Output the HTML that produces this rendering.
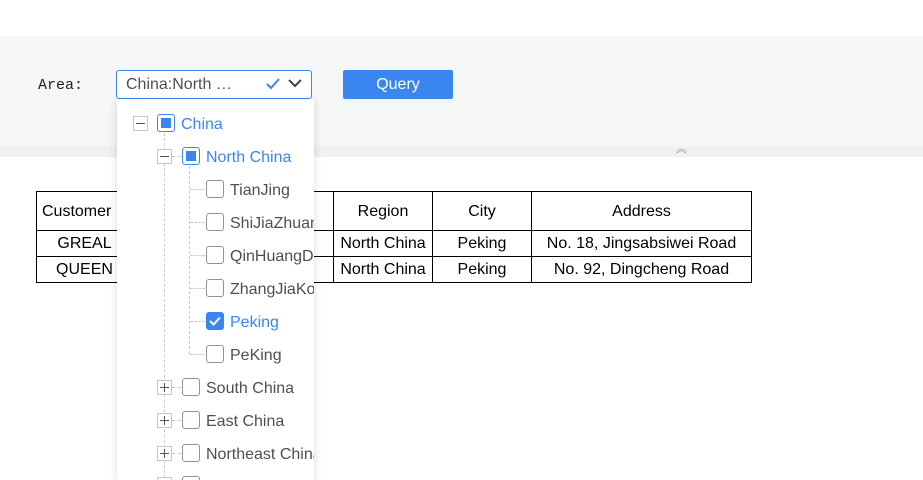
<!DOCTYPE html>
<html><head><style>
html,body{margin:0;width:923px;height:480px;overflow:hidden}
body{background:#fff;font-family:"Liberation Sans",sans-serif;position:relative}
.a{position:absolute}
.band{left:0;top:36px;width:923px;height:110px;background:#f5f6f7}
.band2{left:0;top:146px;width:923px;height:11px;background:#eef0f2}
table{position:absolute;left:36px;top:191px;border-collapse:collapse;font-size:16px;color:#000}
td{border:1px solid #000;text-align:center;padding:0;white-space:nowrap;overflow:hidden}
.dd{left:117px;top:99px;width:197px;height:381px;background:#fff;box-shadow:0 2px 8px rgba(0,0,0,.15)}
.cb{position:absolute;width:16px;height:16px;border:1px solid #8c94a3;border-radius:3px;background:#fff}
.cb.half{border-color:#3a86f0}
.cb.half:after{content:"";position:absolute;left:3px;top:3px;width:10px;height:10px;background:#3a86f0}
.cb.on{background:#3a86f0;border-color:#3a86f0}
.t{position:absolute;font-size:16px;color:#4a4f5a;white-space:nowrap}
.bl{color:#3a86f0}
.ex{position:absolute;width:13px;height:13px;border:1px solid #c4c8ce;background:#fff}
.ex:before{content:"";position:absolute;left:2px;top:5.5px;width:9px;height:1.5px;background:#555}
.ex.p:after{content:"";position:absolute;left:5.8px;top:2px;width:1.5px;height:9px;background:#555}
.vl{position:absolute;border-left:1px dashed #c8ccd2;width:0}
.hl{position:absolute;border-top:1px dashed #c8ccd2;height:0}
</style></head><body>
<div class="a band"></div><div class="a band2"></div>
<div class="a" style="left:676px;top:144px;color:#8a9099;font-size:11px;line-height:10px">︽</div>
<div class="a" style="left:38px;top:77px;font-family:'Liberation Mono',monospace;font-size:15px;color:#222">Area:</div>
<div class="a" style="left:116px;top:70px;width:194px;height:27px;border:1px solid #3a86f0;border-radius:3px;background:#fff"></div>
<div class="a" style="left:126px;top:76px;font-size:16px;color:#4a4f5a">China:North …</div>
<svg class="a" style="left:264px;top:76px" width="48" height="16"><path d="M3 8l4 4 8-9" stroke="#3a86f0" stroke-width="2" fill="none"/><path d="M25 4l6 6 6-6" stroke="#444" stroke-width="2" fill="none"/></svg>
<div class="a" style="left:343px;top:70px;width:110px;height:29px;background:#3a86f0;border-radius:2px;color:#fff;font-size:16px;text-align:center;line-height:30px">Query</div>
<table>
<tr style="height:39px"><td style="width:80px;text-align:left;padding-left:5px;padding-top:2px">Customer</td><td style="width:210px"></td><td style="width:98px;padding-top:2px">Region</td><td style="width:98px;padding-top:2px">City</td><td style="width:219px;padding-top:2px">Address</td></tr>
<tr style="height:26px"><td style="padding-left:10px">GREAL</td><td></td><td>North China</td><td>Peking</td><td>No. 18, Jingsabsiwei Road</td></tr>
<tr style="height:26px"><td style="padding-left:10px">QUEEN</td><td></td><td>North China</td><td>Peking</td><td>No. 92, Dingcheng Road</td></tr>
</table>
<div class="a dd"></div>
<div class="vl" style="left:164px;top:133px;height:350px"></div>
<div class="vl" style="left:189px;top:166px;height:188px"></div>
<div class="ex" style="left:133px;top:116px"></div>
<div class="cb half" style="left:157px;top:114px"></div><div class="t bl" style="left:181px;top:116px">China</div>
<div class="ex" style="left:157px;top:149px"></div><div class="hl" style="left:172px;top:156px;width:9px"></div>
<div class="cb half" style="left:182px;top:147px"></div><div class="t bl" style="left:206px;top:149px">North China</div>
<div class="hl" style="left:190px;top:189px;width:15px"></div><div class="cb" style="left:206px;top:180px"></div><div class="t" style="left:230px;top:182px">TianJing</div>
<div class="hl" style="left:190px;top:222px;width:15px"></div><div class="cb" style="left:206px;top:213px"></div><div class="t" style="left:230px;top:215px;width:84px;overflow:hidden">ShiJiaZhuang</div>
<div class="hl" style="left:190px;top:255px;width:15px"></div><div class="cb" style="left:206px;top:246px"></div><div class="t" style="left:230px;top:248px;width:84px;overflow:hidden">QinHuangDao</div>
<div class="hl" style="left:190px;top:288px;width:15px"></div><div class="cb" style="left:206px;top:279px"></div><div class="t" style="left:230px;top:281px;width:84px;overflow:hidden">ZhangJiaKou</div>
<div class="hl" style="left:190px;top:321px;width:15px"></div><div class="cb on" style="left:206px;top:312px"><svg width="16" height="16" style="position:absolute;left:0;top:0"><path d="M3 8l3.5 3.5L13 4.5" stroke="#fff" stroke-width="2" fill="none"/></svg></div><div class="t bl" style="left:230px;top:314px">Peking</div>
<div class="hl" style="left:190px;top:354px;width:15px"></div><div class="cb" style="left:206px;top:345px"></div><div class="t" style="left:230px;top:347px">PeKing</div>
<div class="ex p" style="left:157px;top:380px"></div><div class="hl" style="left:172px;top:387px;width:9px"></div><div class="cb" style="left:182px;top:378px"></div><div class="t" style="left:206px;top:380px">South China</div>
<div class="ex p" style="left:157px;top:413px"></div><div class="hl" style="left:172px;top:420px;width:9px"></div><div class="cb" style="left:182px;top:411px"></div><div class="t" style="left:206px;top:413px">East China</div>
<div class="ex p" style="left:157px;top:446px"></div><div class="hl" style="left:172px;top:453px;width:9px"></div><div class="cb" style="left:182px;top:444px"></div><div class="t" style="left:206px;top:446px;width:108px;overflow:hidden">Northeast China</div>
<div class="ex p" style="left:157px;top:477px"></div><div class="cb" style="left:182px;top:476px"></div>
</body></html>
